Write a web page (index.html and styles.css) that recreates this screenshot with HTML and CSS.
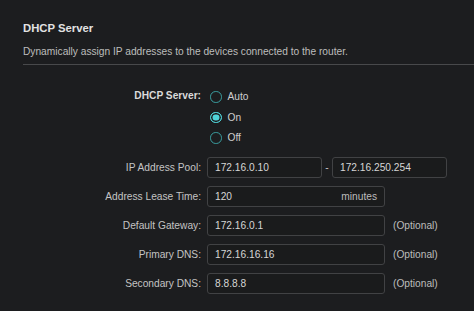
FILE: index.html
```html
<!DOCTYPE html>
<html lang="en">
<head>
  <meta charset="UTF-8">
  <title>DHCP Server</title>
  <link rel="stylesheet" href="styles.css">
</head>
<body>

<div class="panel">
  <h2 class="panel-title">DHCP Server</h2>
  <p class="panel-desc">Dynamically assign IP addresses to the devices connected to the router.</p>

  <div class="form">
    <div class="row row-radio">
      <div class="label strong">DHCP Server:</div>
      <div class="radios">
        <label class="radio"><span class="dot"></span>Auto</label>
        <label class="radio checked"><span class="dot"></span>On</label>
        <label class="radio"><span class="dot"></span>Off</label>
      </div>
    </div>

    <div class="row">
      <div class="label">IP Address Pool:</div>
      <div class="field small">172.16.0.10</div>
      <span class="dash">-</span>
      <div class="field small">172.16.250.254</div>
    </div>

    <div class="row">
      <div class="label">Address Lease Time:</div>
      <div class="field">120<span class="unit">minutes</span></div>
    </div>

    <div class="row">
      <div class="label">Default Gateway:</div>
      <div class="field">172.16.0.1</div>
      <span class="hint">(Optional)</span>
    </div>

    <div class="row">
      <div class="label">Primary DNS:</div>
      <div class="field">172.16.16.16</div>
      <span class="hint">(Optional)</span>
    </div>

    <div class="row">
      <div class="label">Secondary DNS:</div>
      <div class="field">8.8.8.8</div>
      <span class="hint">(Optional)</span>
    </div>
  </div>
</div>

</body>
</html>
```

FILE: styles.css
```css
body {
  margin: 0;
  background: #1c1d1f;
  color: #c9c9c9;
  font-family: "Liberation Sans", Arial, sans-serif;
}

.panel {
  padding: 21px 0 0 23px;
}

.panel-title {
  margin: 0;
  font-size: 11.3px;
  font-weight: bold;
  color: #e2e2e2;
  line-height: 15px;
}

.panel-desc {
  margin: 0;
  padding: 9px 0 6px;
  font-size: 10.2px;
  line-height: 13px;
  color: #bdbdbd;
  border-bottom: 1px solid #48494b;
}

.form {
  padding-top: 25px;
}

.row {
  display: flex;
  align-items: center;
  height: 21px;
  margin-bottom: 8px;
}

.row-radio {
  align-items: flex-start;
  height: auto;
  margin-bottom: 12px;
}

.label {
  width: 178px;
  padding-right: 6px;
  text-align: right;
  font-size: 10.2px;
  color: #c4c4c4;
}

.label.strong {
  font-weight: bold;
  color: #dadada;
}

.radios {
  display: flex;
  flex-direction: column;
  gap: 7px;
  margin-left: 3px;
}

.radio {
  display: flex;
  align-items: center;
  height: 13.5px;
  font-size: 10.2px;
  color: #cfcfcf;
}

.dot {
  width: 9.5px;
  height: 9.5px;
  border: 1.5px solid #3a9ea0;
  border-radius: 50%;
  margin-right: 6px;
  box-sizing: content-box;
}

.radio.checked .dot {
  background: #4fd3d8;
  border-color: #4fd3d8;
  box-shadow: inset 0 0 0 1.5px #1c1d1f;
}

.field {
  display: flex;
  align-items: center;
  box-sizing: border-box;
  width: 178px;
  height: 21px;
  padding: 0 7px;
  border: 1px solid #414244;
  border-radius: 3px;
  background: #1a1b1c;
  font-size: 10.2px;
  color: #d6d6d6;
}

.field.small {
  width: 115px;
}

.unit {
  margin-left: auto;
  color: #bdbdbd;
}

.dash {
  width: 10px;
  text-align: center;
  font-size: 10.2px;
}

.hint {
  margin-left: 8px;
  font-size: 10.2px;
  color: #bdbdbd;
}
```
